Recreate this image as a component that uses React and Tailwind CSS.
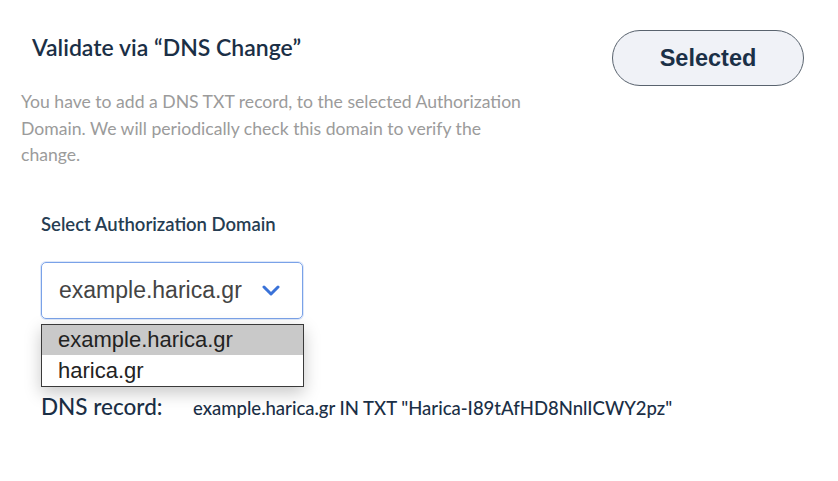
import React from 'react';

const navy = 'text-[#1b2f46]';

const DnsChangeCard = () => {
    return (
        <div className="w-[838px] h-[481px] bg-white font-['Lato','Noto_Sans',sans-serif] overflow-hidden">
            <div className="flex justify-between pt-[30px] pr-[34px]">
                <div className="pl-[21px]">
                    <h2 className={`pl-[11px] pt-[3px] text-[23px] leading-[28px] font-semibold ${navy}`}>
                        Validate via “DNS Change”
                    </h2>
                    <p className="mt-[28px] w-[505px] text-[17.6px] leading-[26.5px] text-[#9b9b9b]">
                        You have to add a DNS TXT record, to the selected Authorization Domain. We will periodically check this domain to verify the change.
                    </p>
                </div>
                <button className="w-[192px] h-[56px] rounded-full bg-[#f0f2f7] border-[1.5px] border-[#59636e] pt-[2px] text-[23.5px] font-bold text-[#1b3047] font-['Liberation_Sans',Arial,sans-serif]">
                    Selected
                </button>
            </div>

            <div className="pl-[41px] pt-[44px]">
                <div className="text-[18.5px] leading-[22px] font-semibold text-[#263d52]">
                    Select Authorization Domain
                </div>

                <div className="relative mt-[27px] w-[262px]">
                    <div className="h-[57px] rounded-[5px] border-[1.5px] border-[#7aa2e8] shadow-[0_0_0_1px_rgba(120,160,230,0.25)] flex items-center justify-between pl-[17px] pr-[22px]">
                        <span className="text-[23px] text-[#444] font-['Liberation_Sans',Arial,sans-serif]">example.harica.gr</span>
                        <svg width="18" height="11" viewBox="0 0 18 11" fill="none">
                            <path d="M2 2l7 7 7-7" stroke="#3a72d8" strokeWidth="3" strokeLinecap="round" strokeLinejoin="round" />
                        </svg>
                    </div>

                    <ul className="absolute left-0 top-[62px] w-[263px] border-[1.5px] border-[#3a3a3a] bg-white shadow-[0_6px_16px_rgba(0,0,0,0.22)] font-['Liberation_Sans',Arial,sans-serif] text-[22px] text-[#222]">
                        <li className="h-[30px] leading-[30px] pl-[16px] bg-[#c9c9c9]">example.harica.gr</li>
                        <li className="h-[31px] leading-[31px] pl-[16px]">harica.gr</li>
                    </ul>
                </div>

                <div className={`mt-[71px] flex items-baseline ${navy}`}>
                    <span className="text-[22.5px] font-medium w-[152px]">DNS record:</span>
                    <span className="text-[18.5px] font-medium">example.harica.gr IN TXT "Harica-I89tAfHD8NnlICWY2pz"</span>
                </div>
            </div>
        </div>
    );
};

export default function App() {
    return <DnsChangeCard />;
}
